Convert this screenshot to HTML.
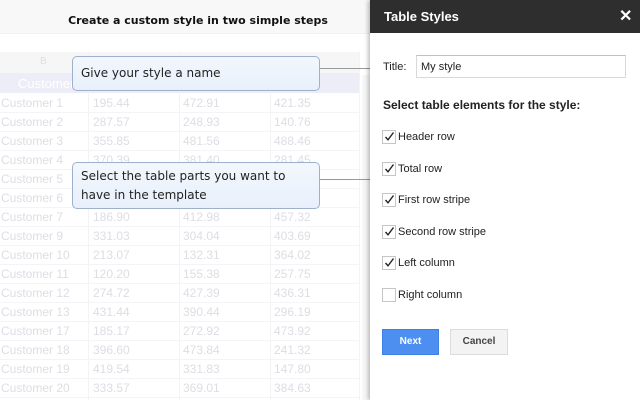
<!DOCTYPE html><html><head><style>
body{margin:0;width:640px;height:400px;overflow:hidden;position:relative;background:#fff;font-family:"Liberation Sans",Arial,sans-serif}
.abs{position:absolute}
.row{position:absolute;left:0;width:360px;height:19px;border-bottom:1px solid #f4f4f6;color:#dcdee4;font-size:12px}
.row span{position:absolute;top:3px}
.cb{position:absolute;left:382px;width:12px;height:12px;border:1px solid #c6c6c6;background:#fff}
.cb svg{position:absolute;left:1px;top:0}
.lbl{position:absolute;left:398px;font-size:11px;color:#222}
.call{position:absolute;left:72px;width:248px;border:1px solid #9fb0cc;border-radius:5px;background:linear-gradient(#f3f7fd,#e8f0fb);font-family:"DejaVu Sans",sans-serif;font-size:12px;color:#222;padding-left:8px;box-sizing:border-box;white-space:nowrap}
</style></head><body>
<div class="abs" style="left:0;top:0;width:370px;height:33px;background:#f8f8f8;border-bottom:1px solid #f0f0f0"></div>
<div class="abs" style="left:0;top:52px;width:360px;height:21px;background:#f6f6f6;color:#e0e0e0;font-size:10px"><span style="position:absolute;left:40px;top:4px">B</span></div>
<div class="abs" style="left:0;top:73px;width:360px;height:20px;background:#ededf8;color:#fff;font-size:13px"><span style="position:absolute;left:18px;top:3px">Customer</span></div>
<div class="abs" style="left:88px;top:52px;width:1px;height:348px;background:#f3f3f5"></div>
<div class="abs" style="left:179px;top:52px;width:1px;height:348px;background:#f3f3f5"></div>
<div class="abs" style="left:270px;top:52px;width:1px;height:348px;background:#f3f3f5"></div>
<div class="abs" style="left:359px;top:52px;width:1px;height:348px;background:#f3f3f5"></div>
<div class="abs" style="left:362px;top:75px;width:8px;height:325px;background:#f7f7f7"></div>
<div id="rows"></div>
<div class="abs" style="left:38px;top:14px;width:320px;text-align:center;white-space:nowrap;font-family:'DejaVu Sans',sans-serif;font-weight:bold;font-size:11px;color:#111">Create a custom style in two simple steps</div>
<div class="call" style="top:56px;height:35px;line-height:32px">Give your style a name</div>
<div class="call" style="top:162px;height:47px;line-height:19px;padding-top:4px">Select the table parts you want to<br>have in the template</div>
<div class="abs" style="left:320px;top:68px;width:50px;height:1px;background:#999"></div>
<div class="abs" style="left:320px;top:179px;width:50px;height:1px;background:#999"></div>
<div class="abs" style="left:370px;top:0;width:270px;height:400px;background:#fff;box-shadow:-2px 0 4px rgba(0,0,0,.25)"></div>
<div class="abs" style="left:370px;top:0;width:270px;height:33px;background:#2e2e2e"></div>
<div class="abs" style="left:384px;top:9px;color:#fff;font-weight:bold;font-size:13px">Table Styles</div>
<div class="abs" style="left:619px;top:6px;color:#fff;font-weight:bold;font-size:16px">✕</div>
<div class="abs" style="left:383px;top:61px;font-size:11px;color:#222">Title:</div>
<div class="abs" style="left:416px;top:55px;width:210px;height:23px;border:1px solid #d9d9d9;border-top-color:#c0c0c0;box-sizing:border-box;font-size:11px;color:#222;padding:5px 0 0 4px">My style</div>
<div class="abs" style="left:383px;top:98px;font-size:12px;font-weight:bold;color:#222">Select table elements for the style:</div>
<div id="cbs"></div>
<div class="abs" style="left:382px;top:329px;width:57px;height:26px;background:#4d8ff0;border:1px solid #3f7fe6;box-sizing:border-box;color:#fff;font-weight:bold;font-size:10px;text-align:center;line-height:24px">Next</div>
<div class="abs" style="left:450px;top:329px;width:58px;height:26px;background:#f3f3f3;border:1px solid #dcdcdc;box-sizing:border-box;color:#444;font-weight:bold;font-size:10px;text-align:center;line-height:24px">Cancel</div>
<script>
var d=[["Customer 1","195.44","472.91","421.35"],["Customer 2","287.57","248.93","140.76"],["Customer 3","355.85","481.56","488.46"],["Customer 4","370.39","381.40","281.45"],["Customer 5","",""," "],["Customer 6","","",""],["Customer 7","186.90","412.98","457.32"],["Customer 9","331.03","304.04","403.69"],["Customer 10","213.07","132.31","364.02"],["Customer 11","120.20","155.38","257.75"],["Customer 12","274.72","427.39","436.31"],["Customer 13","431.44","390.44","296.19"],["Customer 17","185.17","272.92","473.92"],["Customer 18","396.60","473.84","241.32"],["Customer 19","419.54","331.83","147.80"],["Customer 20","333.57","369.01","384.63"]];
var h="";d.forEach(function(r,i){h+='<div class="row" style="top:'+(93+i*19)+'px"><span style="left:1px">'+r[0]+'</span><span style="left:93px">'+r[1]+'</span><span style="left:183px">'+r[2]+'</span><span style="left:274px">'+r[3]+'</span></div>'});
document.getElementById("rows").innerHTML=h;
var c=[["Header row",1],["Total row",1],["First row stripe",1],["Second row stripe",1],["Left column",1],["Right column",0]],ys=[130,162,193,225,256,288],g="";
c.forEach(function(x,i){g+='<div class="cb" style="top:'+ys[i]+'px">'+(x[1]?'<svg width="11" height="11"><path d="M1.5 6 L4 8.8 L9.5 1.5" stroke="#222" stroke-width="1.4" fill="none"/></svg>':'')+'</div><div class="lbl" style="top:'+(ys[i]+1)+'px">'+x[0]+'</div>'});
document.getElementById("cbs").innerHTML=g;
</script>
</body></html>
